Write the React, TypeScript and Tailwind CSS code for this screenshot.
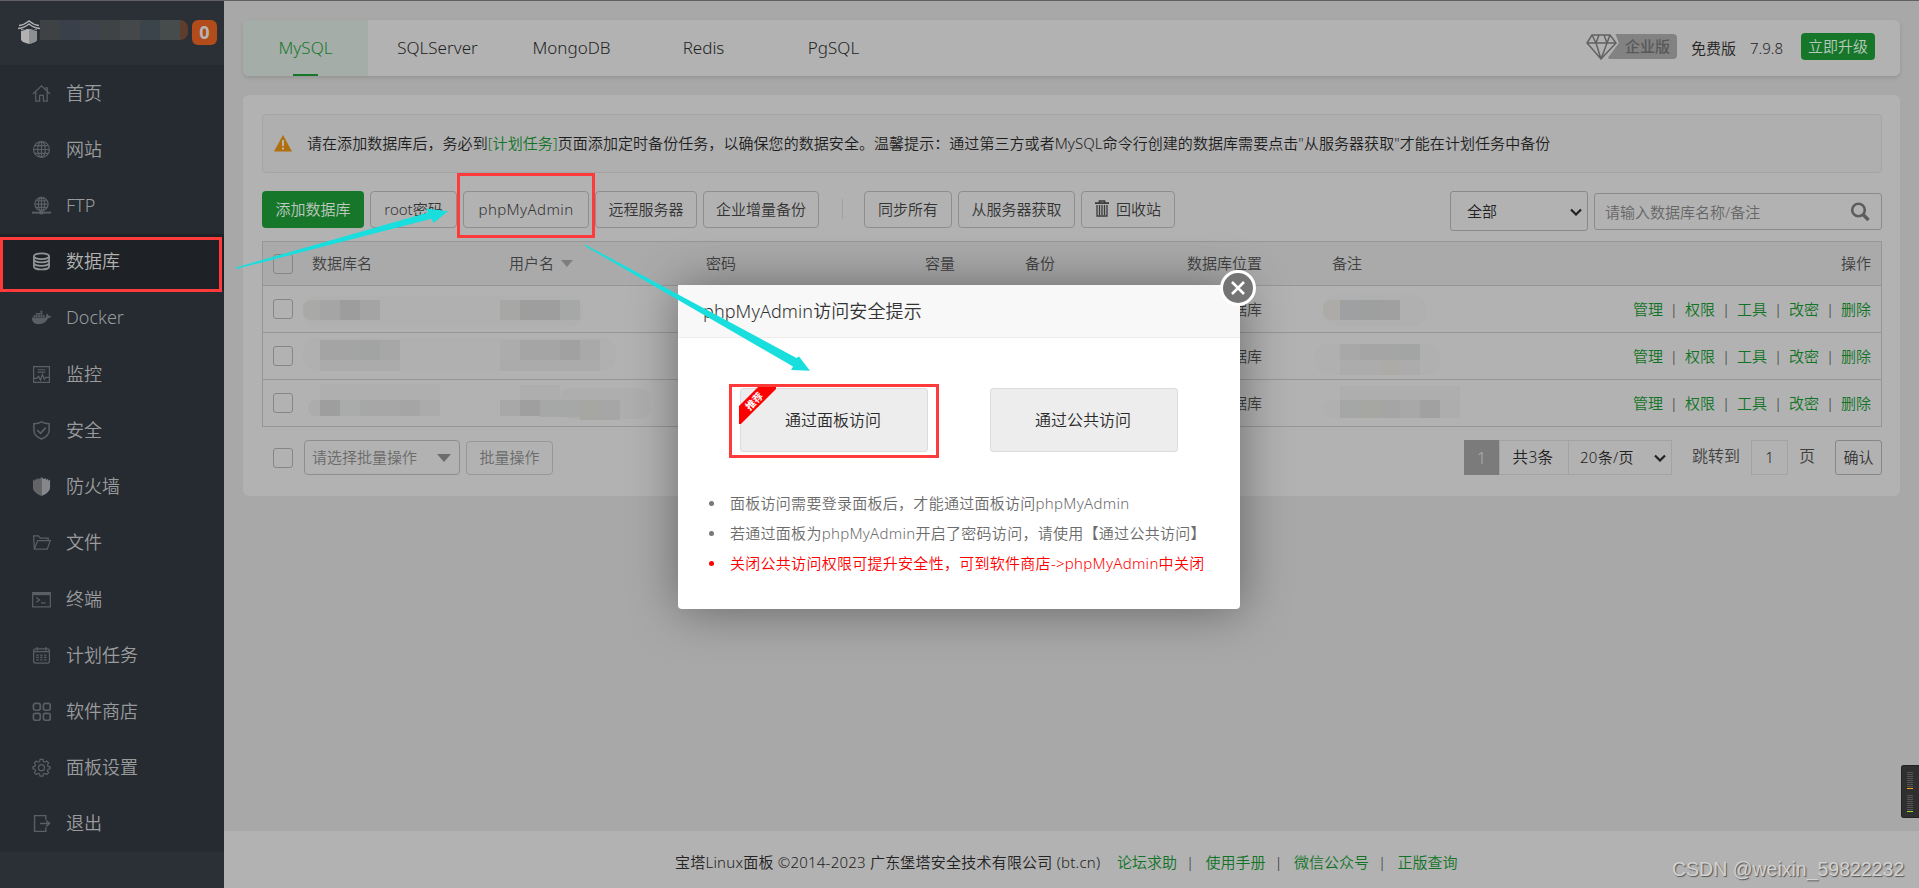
import { ReactNode } from "react";
import { FaDocker } from "react-icons/fa";

interface MenuItem {
  icon: ReactNode;
  text: string;
}

interface Tab {
  text: string;
  width: string;
}

interface Block {
  x: number;
  y: number;
  w: number;
  h: number;
  color: string;
  r?: number;
}

const Icon = ({ children }: { children: ReactNode }) => (
  <svg
    width="19"
    height="19"
    viewBox="0 0 20 20"
    fill="none"
    stroke="currentColor"
    strokeWidth="1.3"
  >
    {children}
  </svg>
);

const menu: MenuItem[] = [
  {
    icon: (
      <Icon>
        <path d="M1 10.5 10 2l9 8.5M4 8.5V18h4v-6h4v6h4V8.5M14 4h2v3" />
      </Icon>
    ),
    text: "首页",
  },
  {
    icon: (
      <Icon>
        <circle cx="10" cy="10" r="8.3" />
        <ellipse cx="10" cy="10" rx="4" ry="8.3" />
        <path d="M10 2v16M2 10h16M3 6h14M3 14h14" />
      </Icon>
    ),
    text: "网站",
  },
  {
    icon: (
      <Icon>
        <circle cx="10" cy="8.5" r="7" />
        <ellipse cx="10" cy="8.5" rx="3.3" ry="7" />
        <path d="M10 2v13M3 8.5h14M4 5h12M4 12h12" />
        <path d="M0 17.5h20" strokeWidth="2" />
        <path d="M8 17.5h4" strokeWidth="3.5" />
      </Icon>
    ),
    text: "FTP",
  },
  {
    icon: (
      <Icon>
        <ellipse cx="10" cy="4.4" rx="8" ry="3" strokeWidth="1.8" />
        <path
          d="M2 4.4v11c0 1.7 3.6 3 8 3s8-1.3 8-3v-11M2 8c0 1.7 3.6 3 8 3s8-1.3 8-3M2 11.7c0 1.7 3.6 3 8 3s8-1.3 8-3"
          strokeWidth="1.8"
        />
      </Icon>
    ),
    text: "数据库",
  },
  { icon: <FaDocker size={19} />, text: "Docker" },
  {
    icon: (
      <Icon>
        <path d="M1.7 1.7h16.6v16.6H1.7zM6 5h8M6 7.5h8" />
        <path d="M2 14h3l2-2 2 4 2-6 2 5 1.5-2H18" />
      </Icon>
    ),
    text: "监控",
  },
  {
    icon: (
      <Icon>
        <path
          d="M10 1c2.5 1.5 5 2 8 2v7c0 4-3.5 7-8 9-4.5-2-8-5-8-9V3c3 0 5.5-.5 8-2z"
          strokeWidth="1.6"
        />
        <path d="m5.5 9.5 3.5 3.5 5.5-6" strokeWidth="1.8" />
      </Icon>
    ),
    text: "安全",
  },
  {
    icon: (
      <Icon>
        <path
          d="M10 0v20c-5-2-9-5-9-9V3l2 1V2l2.5 1V1L8 2z"
          fill="#626466"
          stroke="none"
        />
        <path
          d="M10 0v20c5-2 9-5 9-9V3l-2 1V2l-2.5 1V1L12 2z"
          fill="#85878a"
          stroke="none"
        />
      </Icon>
    ),
    text: "防火墙",
  },
  {
    icon: (
      <Icon>
        <path d="M2.5 17 1.7 3h5l2 2.5H17V8M2.5 17H16L19.3 8H6z" />
      </Icon>
    ),
    text: "文件",
  },
  {
    icon: (
      <Icon>
        <path d="M.7 2.7h18.6v15H.7zM4.5 8 8 10.5 4.5 13M9.5 13.5h5" />
        <path d="M1 4.2h18" strokeWidth="2.5" />
      </Icon>
    ),
    text: "终端",
  },
  {
    icon: (
      <Icon>
        <rect x="1.7" y="3" width="16.6" height="15" rx="2" />
        <path d="M2 6h16M5.5 1v4M14.5 1v4" />
        <path d="M4.5 9.5h11M4.5 12h11M4.5 14.7h11" strokeDasharray="2.6 1.5" />
      </Icon>
    ),
    text: "计划任务",
  },
  {
    icon: (
      <Icon>
        <g strokeWidth="1.8">
          <rect x="1.5" y="1.5" width="7.2" height="7.2" rx="2" />
          <rect x="12" y="1.5" width="7.2" height="7.2" rx="2" />
          <rect x="1.5" y="12" width="7.2" height="7.2" rx="2" />
          <rect x="12" y="12" width="7.2" height="7.2" rx="2" />
        </g>
      </Icon>
    ),
    text: "软件商店",
  },
  {
    icon: (
      <Icon>
        <path d="M8.5 1.5h3l.5 2.3 1.5.6 2-1.2 2 2-1.2 2 .6 1.6 2.1.5v2l-2.1.5-.6 1.6 1.2 2-2 2-2-1.2-1.5.6-.5 2.2h-3L8 16.8l-1.5-.6-2 1.2-2-2 1.2-2-.6-1.6-2.1-.5v-2l2.1-.5.6-1.6-1.2-2 2-2 2 1.2L8 3.8z" />
        <circle cx="10" cy="10.2" r="3.2" />
      </Icon>
    ),
    text: "面板设置",
  },
  {
    icon: (
      <Icon>
        <path
          d="M14.5 6V1.7H2.7v16.6h11.8V14M8.5 10H18M15 7l3.5 3-3.5 3"
          strokeWidth="1.5"
        />
      </Icon>
    ),
    text: "退出",
  },
];

const tabs: Tab[] = [
  { text: "MySQL", width: "w-[125px]" },
  { text: "SQLServer", width: "w-[139px]" },
  { text: "MongoDB", width: "w-[129px]" },
  { text: "Redis", width: "w-[135px]" },
  { text: "PgSQL", width: "w-[125px]" },
];

const actions = ["管理", "权限", "工具", "改密", "删除"];

// blurred out names in the first columns and in the remarks
const blocks: Block[] = [
  { x: 303, y: 296, w: 280, h: 31, color: "#b0b0b0", r: 14 },
  { x: 303, y: 300, w: 28, h: 20, color: "#a9a9a7", r: 8 },
  { x: 320, y: 300, w: 20, h: 20, color: "#a5a5a5" },
  { x: 340, y: 300, w: 20, h: 20, color: "#9d9d9d" },
  { x: 360, y: 300, w: 20, h: 20, color: "#a4a4a4" },
  { x: 500, y: 300, w: 20, h: 20, color: "#a7a7a5" },
  { x: 520, y: 300, w: 40, h: 20, color: "#9e9e9e" },
  { x: 560, y: 300, w: 20, h: 20, color: "#a5a8a7" },
  { x: 303, y: 338, w: 313, h: 33, color: "#b0b0b0", r: 14 },
  { x: 320, y: 340, w: 40, h: 20, color: "#a4a4a4" },
  { x: 360, y: 340, w: 20, h: 20, color: "#a2a4a4" },
  { x: 380, y: 340, w: 20, h: 20, color: "#a7a7a7" },
  { x: 320, y: 360, w: 80, h: 11, color: "#ababab" },
  { x: 500, y: 340, w: 20, h: 20, color: "#acacac" },
  { x: 520, y: 340, w: 40, h: 20, color: "#a5a5a5" },
  { x: 560, y: 340, w: 20, h: 20, color: "#a1a1a1" },
  { x: 580, y: 340, w: 20, h: 20, color: "#a9a9a9" },
  { x: 500, y: 360, w: 100, h: 11, color: "#ababab" },
  { x: 320, y: 384, w: 120, h: 16, color: "#afafaf" },
  { x: 308, y: 400, w: 25, h: 16, color: "#acacac", r: 7 },
  { x: 320, y: 400, w: 20, h: 16, color: "#9e9e9e" },
  { x: 340, y: 400, w: 20, h: 16, color: "#aaacac" },
  { x: 360, y: 400, w: 40, h: 16, color: "#a7a7a7" },
  { x: 400, y: 400, w: 20, h: 16, color: "#a5a5a5" },
  { x: 420, y: 400, w: 20, h: 16, color: "#ababab" },
  { x: 520, y: 385, w: 40, h: 15, color: "#aeaeae" },
  { x: 560, y: 388, w: 90, h: 31, color: "#aeaeae", r: 10 },
  { x: 500, y: 400, w: 20, h: 16, color: "#a8a8a8" },
  { x: 520, y: 400, w: 20, h: 16, color: "#9f9f9f" },
  { x: 540, y: 400, w: 40, h: 17, color: "#a6a7a7" },
  { x: 580, y: 400, w: 20, h: 20, color: "#a6a6a3" },
  { x: 600, y: 400, w: 20, h: 20, color: "#a6a6a6" },
  { x: 1323, y: 295, w: 104, h: 31, color: "#b0b0b0", r: 14 },
  { x: 1323, y: 300, w: 25, h: 20, color: "#acaba8", r: 8 },
  { x: 1340, y: 300, w: 20, h: 20, color: "#9ea0a2" },
  { x: 1360, y: 300, w: 20, h: 20, color: "#9da09e" },
  { x: 1380, y: 300, w: 20, h: 20, color: "#a0a0a0" },
  { x: 1315, y: 344, w: 125, h: 31, color: "#b0b0b0", r: 14 },
  { x: 1340, y: 344, w: 20, h: 16, color: "#a8a8a8" },
  { x: 1360, y: 344, w: 40, h: 16, color: "#a5a5a5" },
  { x: 1400, y: 344, w: 20, h: 16, color: "#a2a5a4" },
  { x: 1340, y: 360, w: 80, h: 15, color: "#acacac" },
  { x: 1380, y: 360, w: 20, h: 15, color: "#acaba8" },
  { x: 1340, y: 386, w: 120, h: 14, color: "#aeaeae" },
  { x: 1323, y: 400, w: 30, h: 18, color: "#b0b0b0", r: 8 },
  { x: 1340, y: 400, w: 20, h: 18, color: "#a4a7a6" },
  { x: 1360, y: 400, w: 20, h: 18, color: "#a6a6a3" },
  { x: 1380, y: 400, w: 20, h: 18, color: "#a5a5a5" },
  { x: 1400, y: 400, w: 20, h: 18, color: "#a8a8a8" },
  { x: 1420, y: 400, w: 20, h: 18, color: "#a1a1a1" },
  { x: 1440, y: 400, w: 20, h: 18, color: "#adadad" },
];

const Checkbox = () => (
  <span className="h-5 w-5 shrink-0 rounded-[3px] border border-[#868686]" />
);

const Chevron = () => (
  <svg width="12" height="8" viewBox="0 0 12 8" fill="none">
    <path d="m1 1.5 5 5 5-5" stroke="#222" strokeWidth="2.2" />
  </svg>
);

const Button = ({ width, children }: { width: string; children: ReactNode }) => (
  <button
    className={`flex h-[37px] shrink-0 items-center justify-center rounded border border-[#8e8e8e] text-[#333] ${width}`}
  >
    {children}
  </button>
);

function Sidebar() {
  return (
    <aside className="flex h-full w-56 shrink-0 flex-col bg-[#2b3037]">
      <div className="flex h-16 items-start pt-[18px] pl-[18px]">
        <svg width="22" height="26" viewBox="0 0 22 26" className="shrink-0">
          <path d="M3 10h16v10c0 3-5 4-8 5-3-1-8-2-8-5z" fill="#b2b2b2" />
          <path d="M11 10h8v10c0 3-5 4-8 5z" fill="#8d8f90" />
          <path
            d="M1 6.5c5-.5 7-2 10-4.5 3 2.5 5 4 10 4.5M0 9.5c6-.5 8-2 11-4.5 3 2.5 5 4 11 4.5"
            fill="none"
            stroke="#b2b2b2"
            strokeWidth="1.4"
          />
          <path d="M3 11.5c4-.5 6-2 8-3.5 2 1.500 4 3 8 3.500" fill="none" stroke="#2b3037" />
        </svg>
        <div className="mt-px flex h-5 overflow-hidden rounded-r-lg">
          <span className="w-5 bg-[#3e4245]" />
          <span className="w-5 bg-[#3a4049]" />
          <span className="w-5 bg-[#3e424a]" />
          <span className="w-5 bg-[#3f4346]" />
          <span className="w-5 bg-[#44484a]" />
          <span className="w-5 bg-[#3b444b]" />
          <span className="w-5 bg-[#464b4b]" />
          <span className="w-2 bg-[#5e3d2e]" />
        </div>
        <span className="mt-px ml-1 flex h-[25px] w-[25px] items-center justify-center rounded-md bg-[#b24c1b] text-[18px] font-bold text-[#b5b5b5]">
          0
        </span>
      </div>
      <ul className="grid h-[787px] grid-rows-14 bg-[#262b31] text-[18px]">
        {menu.map((item, i) => (
          <li
            key={item.text}
            className={`flex items-center pl-8 ${i === 3 ? "bg-[#1e2226] text-[#b2b2b2]" : "text-[#9a9b9d]"}`}
          >
            <span
              className={`flex w-[34px] shrink-0 ${i === 3 ? "text-[#929496]" : "text-[#5b5f63]"}`}
            >
              {item.icon}
            </span>
            <span>{item.text}</span>
          </li>
        ))}
      </ul>
    </aside>
  );
}

function TopTabs() {
  return (
    <nav className="flex h-14 items-stretch overflow-hidden rounded-md bg-[#b2b2b2] text-[17px] text-[#242424]">
      {tabs.map((tab, i) => (
        <div
          key={tab.text}
          className={`flex flex-col items-center justify-end ${tab.width} ${i === 0 ? "bg-[#a5ada8] text-[#18792b]" : ""}`}
        >
          <span className="pb-[14px] leading-6">{tab.text}</span>
          <span className={`h-0.5 w-[25px] ${i === 0 ? "bg-[#16772a]" : ""}`} />
        </div>
      ))}
      <div className="ml-auto flex items-center pr-[25px] pb-[3px] text-[15px]">
        <svg width="31" height="26" viewBox="0 0 31 26" fill="none">
          <path
            d="M6 1h18l6 8-15 16L1 9zM1 9h29M10 9l5 16 6-16-3-8M10 9l3-8M6 1l4 8M24 1l-3 8"
            stroke="#626262"
            strokeWidth="1.5"
          />
        </svg>
        <span className="-ml-2.5 flex h-[25px] w-[70px] items-center justify-end rounded-sm bg-[#828282] pr-[7px] font-medium text-[#585858] [clip-path:polygon(12%_0,100%_0,100%_100%,0_100%,17%_36%)]">
          企业版
        </span>
        <span className="mt-[3px] ml-[14px]">免费版</span>
        <span className="mt-[3px] ml-[14px] w-[51px]">7.9.8</span>
        <button className="h-[27px] w-[74px] rounded bg-[#16772a] text-[#b9c9bc]">
          立即升级
        </button>
      </div>
    </nav>
  );
}

function Toolbar() {
  return (
    <div className="mt-[18px] flex h-[41px] items-start">
      <button className="h-[37px] w-[102px] rounded bg-[#16772a] text-[#c0c9c1]">
        添加数据库
      </button>
      <div className="ml-1.5 flex gap-1.5">
        <Button width="w-[87px]">root密码</Button>
        <Button width="w-[126px]">
          <span className="tracking-[0.4px]">phpMyAdmin</span>
        </Button>
        <Button width="w-[102px]">远程服务器</Button>
        <Button width="w-[116px]">企业增量备份</Button>
      </div>
      <span className="mt-2 mr-[21px] ml-[23px] h-5 w-px bg-[#a0a0a0]" />
      <div className="flex gap-1.5">
        <Button width="w-[88px]">同步所有</Button>
        <Button width="w-[117px]">从服务器获取</Button>
        <Button width="w-[94px]">
          <svg width="14" height="17" viewBox="0 0 14 17" className="mr-[7px] mb-0.5" fill="none" stroke="#3b3b3b">
            <path d="M0 3.2h14M4.5 2.5V1h5v1.5" strokeWidth="1.7" />
            <path d="M2 5v11h10V5M4.5 5v10M7 5v10M9.5 5v10" strokeWidth="1.3" />
          </svg>
          回收站
        </Button>
      </div>
      <div className="ml-auto flex h-10 w-[138px] items-center justify-between rounded-[3px] border border-[#8a8a8a] pt-px pr-[5px] pl-4 text-[#222]">
        全部
        <Chevron />
      </div>
      <div className="mt-0.5 ml-1.5 flex h-[37px] w-72 items-center justify-between rounded-[3px] border border-[#8a8a8a] pr-[11px] pl-2.5 text-[#666]">
        <span className="pt-0.5">请输入数据库名称/备注</span>
        <svg width="20" height="20" viewBox="0 0 20 20" fill="none" stroke="#5c5c5c">
          <circle cx="8.5" cy="8" r="6.3" strokeWidth="2.6" />
          <path d="m13 12.5 5.5 5.5" strokeWidth="3.4" />
        </svg>
      </div>
    </div>
  );
}

function DatabaseTable() {
  return (
    <div className="mt-[9px] border border-[#969696] text-[#404040]">
      <div className="flex h-[43px] items-center bg-[#aaaaaa] pl-2.5">
        <Checkbox />
        <span className="ml-[19px] w-[197px]">数据库名</span>
        <span className="flex w-[197px] items-center">
          用户名
          <i className="ml-[7px] border-x-[6.5px] border-t-[7px] border-x-transparent border-t-[#7e7e7e]" />
        </span>
        <span className="w-[219px]">密码</span>
        <span className="w-[100px]">容量</span>
        <span className="w-[162px]">备份</span>
        <span className="w-[145px]">数据库位置</span>
        <span>备注</span>
        <span className="ml-auto pr-2.5">操作</span>
      </div>
      {[0, 1, 2].map((row) => (
        <div key={row} className="flex h-[47px] items-center border-t border-[#969696] pl-2.5">
          <Checkbox />
          <span className="ml-[894px]">本地数据库</span>
          <div className="ml-auto flex pr-2.5 text-[#117326]">
            {actions.map((action, i) => (
              <span key={action} className="flex">
                {i > 0 && <span className="w-[22px] text-center text-[#333]">|</span>}
                {action}
              </span>
            ))}
          </div>
        </div>
      ))}
    </div>
  );
}

function TableFooter() {
  return (
    <div className="mt-[13px] flex h-[35px] items-center pl-[11px] text-[#6a6a6a]">
      <Checkbox />
      <div className="ml-[11px] flex h-full w-[156px] items-center justify-between rounded-sm border border-[#8e8e8e] pr-2 pl-[7px]">
        请选择批量操作
        <i className="border-x-[7px] border-t-[8px] border-x-transparent border-t-[#6d6d6d]" />
      </div>
      <button className="ml-1.5 h-[34px] w-[87px] rounded border border-[#979797]">批量操作</button>
      <div className="ml-auto flex h-full items-stretch text-[#222]">
        <span className="flex w-[35px] items-center justify-center bg-[#7b7b7b] text-base text-[#b0b0b0]">1</span>
        <span className="flex w-[70px] items-center justify-center border border-[#a3a3a3] pr-0.5 text-[15.5px] tracking-[0.3px]">
          共3条
        </span>
        <span className="flex w-[103px] items-center justify-between border border-l-0 border-[#a3a3a3] pr-[5px] pl-[11px]">
          <span className="tracking-[0.3px]">20条/页</span>
          <Chevron />
        </span>
        <span className="ml-5 pt-1 text-base text-[#404040]">跳转到</span>
        <span className="ml-[11px] flex w-[37px] items-center justify-center border border-[#a3a3a3]">1</span>
        <span className="ml-[11px] pt-1 text-base text-[#404040]">页</span>
        <button className="ml-5 w-[47px] rounded-[3px] border border-[#868686] text-[#333]">确认</button>
      </div>
    </div>
  );
}

function Footer() {
  const links = ["论坛求助", "使用手册", "微信公众号", "正版查询"];
  return (
    <footer className="flex h-[57px] shrink-0 items-center bg-[#b2b2b2] pt-[5px] pl-[451px] whitespace-nowrap text-[#222]">
      <span className="w-[442px] tracking-[0.22px]">
        宝塔Linux面板 ©2014-2023 广东堡塔安全技术有限公司 (bt.cn)
      </span>
      {links.map((link, i) => (
        <span key={link} className="flex">
          {i > 0 && <span className="w-[28.5px] pl-[9px] text-[#333]">|</span>}
          <span className="text-[#117326]">{link}</span>
        </span>
      ))}
    </footer>
  );
}

function Modal() {
  return (
    <div className="absolute top-[285px] left-[678px] flex h-[324px] w-[562px] flex-col rounded-sm bg-white text-[#6c6c6c] shadow-[1px_1px_50px_rgba(0,0,0,0.4)]">
      <h2 className="flex h-[53px] items-center border-b border-[#ececec] bg-[#f8f8f8] pl-[25px] text-[18px] tracking-[0.1px] text-[#333]">
        phpMyAdmin访问安全提示
      </h2>
      <div className="mt-[50px] flex gap-[62px] pl-[62px] text-base text-[#2a2a2a]">
        <button className="h-16 w-[188px] rounded-[3px] border border-[#dcdcdc] bg-[#ededed] pr-0.5">通过面板访问</button>
        <button className="h-16 w-[188px] rounded-[3px] border border-[#dcdcdc] bg-[#ededed] pr-0.5">通过公共访问</button>
      </div>
      <ul className="mt-[36px] pl-[31px] leading-[30px] tracking-[0.28px] whitespace-nowrap">
        <li className="flex items-center gap-4 before:size-[5px] before:rounded-full before:bg-[#777]">
          面板访问需要登录面板后，才能通过面板访问phpMyAdmin
        </li>
        <li className="flex items-center gap-4 before:size-[5px] before:rounded-full before:bg-[#777]">
          若通过面板为phpMyAdmin开启了密码访问，请使用【通过公共访问】
        </li>
        <li className="flex items-center gap-4 text-[#ff0000] before:size-[5px] before:rounded-full before:bg-[#ff0000]">
          {"关闭公共访问权限可提升安全性，可到软件商店->phpMyAdmin中关闭"}
        </li>
      </ul>
      {/* corner ribbon */}
      <div className="absolute top-[102px] left-[61px] h-[37px] w-[37px] overflow-hidden">
        <span className="absolute top-[7px] -left-[20px] h-[14px] w-[70px] -rotate-45 bg-[#ff0000] text-center text-[10px] leading-[14px] font-bold text-white">
          推荐
        </span>
      </div>
      <svg width="38" height="38" viewBox="0 0 38 38" className="absolute -top-4 left-[541px]">
        <circle cx="19" cy="19" r="16.5" fill="#757575" stroke="#fff" strokeWidth="3" />
        <path d="m13 13 12 12M25 13 13 25" stroke="#fff" strokeWidth="2.6" />
      </svg>
    </div>
  );
}

function LoadWidget() {
  const bars = [0, 1, 2, 3, 4, 5, 6, 7];
  return (
    <div className="absolute top-[765px] right-0 flex h-[53px] w-[18px] flex-col gap-1.5 rounded-l-[3px] border border-r-0 border-[#222] bg-[#2f2f2f] pt-1.5 pl-[5px]">
      <div className="flex w-1.5 flex-col gap-px">
        {bars.map((b) => (
          <i key={b} className="h-px bg-[#555]" />
        ))}
        <i className="h-px bg-[#f5a01e]" />
      </div>
      <div className="flex w-1.5 flex-col gap-px">
        {bars.map((b) => (
          <i key={b} className="h-px bg-[#555]" />
        ))}
        <i className="h-px bg-[#90e030]" />
      </div>
    </div>
  );
}

export default function App() {
  return (
    <div className="relative flex h-[888px] w-[1919px] overflow-hidden border-t border-[#606064] bg-[#a8a8a8] font-['Noto_Sans','Noto_Sans_CJK_SC',sans-serif] text-[15px] font-[350]">
      <Sidebar />
      <main className="flex min-w-0 flex-1 flex-col">
        <div className="px-[19px] pt-[19px]">
          <div className="rounded-md shadow-[0_2px_4px_rgba(0,0,0,0.12)]">
            <TopTabs />
          </div>
          <section className="mt-[19px] h-[401px] rounded-md bg-[#b2b2b2] px-[18px] pt-[19px] pl-[19px]">
            <div className="flex h-[59px] items-center rounded-sm border border-[#a4a4a4] bg-[#afafaf] pl-[11px] tracking-[0.06px] whitespace-nowrap text-[#1e1e1e]">
              <svg width="18" height="17" viewBox="0 0 18 17" className="mr-[15px]">
                <path d="M9 0 18 16.5H0z" fill="#b1700d" />
                <path d="M9 5v6M9 12.5v2" stroke="#b9b5ae" strokeWidth="2" />
              </svg>
              <p>
                请在添加数据库后，务必到<a className="text-[#117326]">[计划任务]</a>
                页面添加定时备份任务，以确保您的数据安全。温馨提示：通过第三方或者MySQL命令行创建的数据库需要点击"从服务器获取"才能在计划任务中备份
              </p>
            </div>
            <Toolbar />
            <DatabaseTable />
            <TableFooter />
          </section>
        </div>
        <div className="flex-1" />
        <Footer />
      </main>

      <svg width="1919" height="888" className="absolute -top-px left-0">
        {blocks.map((b, i) => (
          <rect key={i} x={b.x} y={b.y} width={b.w} height={b.h} rx={b.r ?? 0} fill={b.color} />
        ))}
      </svg>

      <div className="absolute -top-px left-0">
        <Modal />
      </div>
      <div className="absolute -top-px right-0">
        <LoadWidget />
      </div>

      {/* highlight frames and arrows */}
      <div className="absolute top-[236px] left-0 h-[55px] w-[222px] border-3 border-[#ff3a3a]" />
      <div className="absolute top-[172px] left-[457px] h-[65px] w-[138px] border-3 border-[#ff3a3a]" />
      <div className="absolute top-[383px] left-[729px] h-[74px] w-[210px] border-3 border-[#ff3a3a]" />
      <svg width="1919" height="888" className="absolute -top-px left-0" fill="#18dede">
        <path d="M236 267.5 428 212.5 426 208.5 448 211.3 433.5 223 431.5 218.8 236 269z" />
        <path d="M585.5 244.8 796.5 358 799 356.5 810 370.7 791 370 793 366.5 585 246z" />
      </svg>

      <span className="absolute top-[854px] left-[1672px] font-['Liberation_Sans',sans-serif] text-[19.5px] leading-[28px] font-normal whitespace-nowrap text-[#d2d2d2] [text-shadow:1px_1px_1px_#555]">
        CSDN @weixin_59822232
      </span>
    </div>
  );
}
